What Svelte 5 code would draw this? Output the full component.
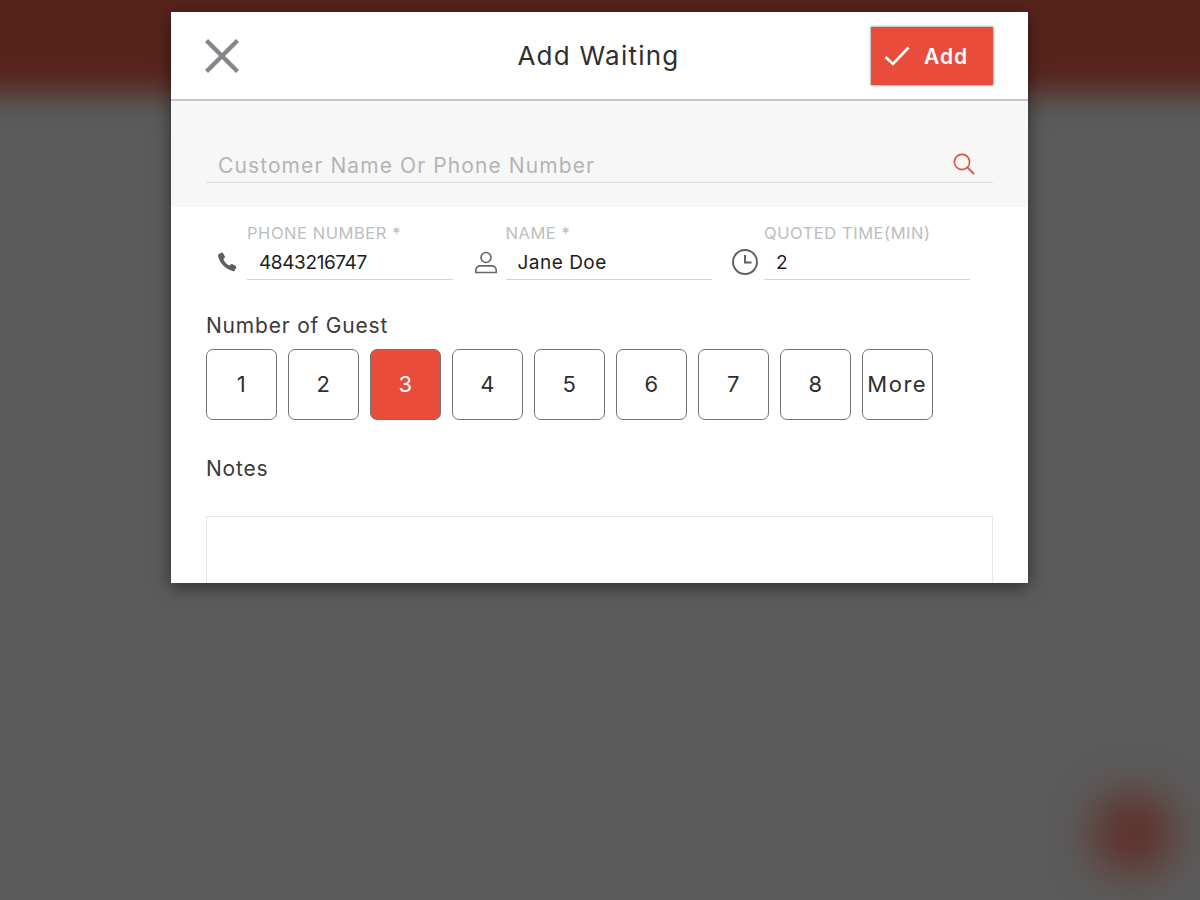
<script>
  const guests = ['1', '2', '3', '4', '5', '6', '7', '8', 'More'];
  let selected = '3';
</script>

<div class="page">
  <div class="band"></div>
  <div class="fab"></div>

  <div class="modal">
    <header class="head">
      <button class="close" aria-label="Close">
        <svg width="36" height="36" viewBox="0 0 36 36"><path d="M2.5 2.5 33.5 33.5M33.5 2.5 2.5 33.5" stroke="#85858b" stroke-width="4.4" fill="none"/></svg>
      </button>
      <h1>Add Waiting</h1>
      <button class="add">
        <svg width="26" height="22" viewBox="0 0 26 22"><path d="M1.5 12 9 19 24.5 2.5" stroke="#fff" stroke-width="2.6" fill="none"/></svg>
        <span>Add</span>
      </button>
    </header>

    <section class="search">
      <div class="searchline">
        <span class="ph">Customer Name Or Phone Number</span>
        <svg width="24" height="24" viewBox="0 0 24 24"><circle cx="10" cy="10" r="7.6" stroke="#e94c3b" stroke-width="1.6" fill="none"/><path d="M15.6 15.6 22 22" stroke="#e94c3b" stroke-width="1.8" fill="none"/></svg>
      </div>
    </section>

    <section class="body">
      <div class="fields">
        <div class="field">
          <svg class="ic" width="24" height="24" viewBox="0 0 24 24"><path fill="#5f5f5f" d="M6.6 2.6c.5-.3 1.1-.1 1.4.4l1.9 3.4c.2.4.2.9-.1 1.2L8.4 9.2c1 2.6 3.4 5 6 6.3l1.6-1.3c.4-.3.8-.3 1.2-.1l3.5 1.9c.5.3.7.9.4 1.4l-1.3 3.1c-.2.5-.7.8-1.2.7C10.6 19.4 4.3 12.9 3 5.5c-.1-.5.2-1 .7-1.2z"/></svg>
          <div class="col">
            <label>PHONE NUMBER *</label>
            <div class="val">4843216747</div>
          </div>
        </div>
        <div class="field">
          <svg class="ic" width="24" height="24" viewBox="0 0 24 24"><circle cx="12" cy="7.5" r="5" stroke="#666" stroke-width="1.6" fill="none"/><path d="M1.8 22.5v-2.3c0-2.4 2-4.3 4.4-4.3h11.6c2.4 0 4.4 1.9 4.4 4.3v2.3z" stroke="#666" stroke-width="1.6" fill="none"/></svg>
          <div class="col">
            <label>NAME *</label>
            <div class="val">Jane Doe</div>
          </div>
        </div>
        <div class="field">
          <svg class="ic" width="26" height="26" viewBox="0 0 26 26"><circle cx="13" cy="13" r="12" stroke="#5f5f5f" stroke-width="1.9" fill="none"/><path d="M13 6v7.5h6.5" stroke="#5f5f5f" stroke-width="1.9" fill="none"/></svg>
          <div class="col">
            <label>QUOTED TIME(MIN)</label>
            <div class="val">2</div>
          </div>
        </div>
      </div>

      <div class="title guest">Number of Guest</div>
      <div class="guests">
        {#each guests as g}
          <button class="g" class:on={g === selected} onclick={() => (selected = g)}>{g}</button>
        {/each}
      </div>

      <div class="title notes">Notes</div>
      <div class="area"></div>
    </section>
  </div>
</div>

<style>
  :global(body) {
    margin: 0;
    background: #5b5b5b;
  }
  .page {
    position: relative;
    height: 900px;
    overflow: hidden;
    background: #5b5b5b;
    font-family: "Inter", "Liberation Sans", sans-serif;
  }
  .band {
    position: absolute;
    left: -60px;
    right: -60px;
    top: -60px;
    height: 153px;
    background: #57241c;
    filter: blur(15px);
  }
  .fab {
    position: absolute;
    left: 1093px;
    top: 793px;
    width: 80px;
    height: 80px;
    border-radius: 50%;
    background: #5f2f27;
    filter: blur(22px);
  }
  .modal {
    position: absolute;
    left: 171px;
    top: 12px;
    width: 857px;
    height: 571px;
    background: #fff;
    overflow: hidden;
    box-shadow: 0 4px 16px rgba(0, 0, 0, 0.5);
  }
  .head {
    height: 87px;
    border-bottom: 2px solid #c6c6c6;
    display: flex;
    align-items: center;
    justify-content: space-between;
    padding: 0 34px 0 33px;
    position: relative;
  }
  button {
    font-family: inherit;
    cursor: pointer;
  }
  .close {
    border: 0;
    background: none;
    padding: 0;
    width: 36px;
    height: 36px;
    margin-top: 1px;
  }
  h1 {
    position: absolute;
    left: 0;
    right: 2px;
    top: 28px;
    margin: 0;
    text-align: center;
    font-size: 26px;
    line-height: 32px;
    font-weight: 400;
    color: #2f2f2f;
    letter-spacing: 1.25px;
  }
  .add {
    width: 124px;
    height: 60px;
    margin-top: 1px;
    background: #e94c3b;
    border: 1px solid #c9c9c9;
    border-radius: 2px;
    box-shadow: 0 0 2px rgba(0, 0, 0, 0.25);
    color: #fff;
    display: flex;
    align-items: center;
    padding: 0 0 0 13px;
    gap: 14px;
    font-size: 21px;
    font-weight: 600;
    letter-spacing: 1px;
  }
  .search {
    height: 106px;
    background: #f7f7f7;
    padding: 0 35px;
    display: flex;
    align-items: flex-end;
  }
  .searchline {
    flex: 1;
    height: 48px;
    margin-bottom: 24px;
    border-bottom: 1px solid #dcdcdc;
    display: flex;
    align-items: center;
    justify-content: space-between;
    padding: 0 17px 0 12px;
  }
  .ph {
    font-size: 21px;
    color: #b4b4b4;
    letter-spacing: 1.1px;
    margin-top: 15px;
  }
  .searchline svg {
    margin-top: 11px;
  }
  .body {
    padding: 16px 35px 0;
  }
  .fields {
    display: flex;
  }
  .field {
    width: 258.5px;
    display: flex;
    align-items: flex-end;
  }
  .ic {
    flex: none;
    margin: 0 0 6px 9px;
  }
  .field:nth-child(3) .ic {
    margin: 0 0 5px 9px;
  }
  .col {
    width: 206px;
    margin-left: 8px;
  }
  .field:nth-child(3) .col {
    margin-left: 6px;
  }
  label {
    display: block;
    font-size: 16.5px;
    line-height: 20px;
    color: #bdbdbd;
    letter-spacing: 0.55px;
  }
  .val {
    height: 37px;
    box-sizing: border-box;
    border-bottom: 1px solid #d4d4d4;
    padding: 8px 0 0 12px;
    font-size: 19px;
    line-height: 24px;
    color: #1c1c1c;
    letter-spacing: 0.5px;
  }
  .field:first-child .val {
    letter-spacing: -0.4px;
  }
  .title {
    font-size: 21px;
    line-height: 28px;
    color: #3a3a3a;
    letter-spacing: 0.8px;
  }
  .guest {
    margin-top: 32px;
  }
  .guests {
    display: flex;
    gap: 11.5px;
    margin-top: 9px;
  }
  .g {
    width: 70.5px;
    height: 70.5px;
    box-sizing: border-box;
    padding: 0;
    border: 1.5px solid #747474;
    border-radius: 7px;
    background: #fff;
    color: #2f2f2f;
    font-size: 22px;
  }
  .g:last-child {
    letter-spacing: 1.5px;
  }
  .g.on {
    background: #e94c3b;
    color: #fff;
  }
  .notes {
    margin-top: 35.5px;
  }
  .area {
    margin-top: 33px;
    height: 120px;
    border: 1px solid #e6e6e6;
  }
</style>
